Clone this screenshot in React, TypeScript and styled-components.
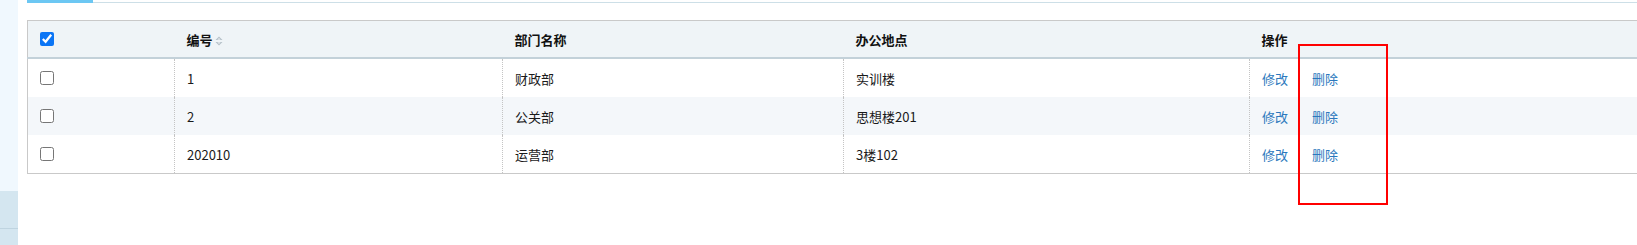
import React from 'react'
import styled, { createGlobalStyle } from 'styled-components'

const GlobalStyle = createGlobalStyle`
  html, body {
    margin: 0;
    padding: 0;
    background: #fff;
    overflow: hidden;
  }
  body {
    font-family: "Noto Sans CJK SC", "Noto Sans", sans-serif;
    font-size: 13px;
    color: #222;
  }
`

type Dept = { id: string; name: string; place: string }

const rows: Dept[] = [
  { id: '1', name: '财政部', place: '实训楼' },
  { id: '2', name: '公关部', place: '思想楼201' },
  { id: '202010', name: '运营部', place: '3楼102' },
]

const SortIcon: React.FC = () => (
  <SortSvg viewBox="0 0 8 10" width="8" height="10">
    <path d="M4 0.5 L7.5 4 L0.5 4 Z" fill="#b5c1c9" />
    <path d="M4 9.5 L7.5 6 L0.5 6 Z" fill="#b5c1c9" />
    <path d="M4 2.2 L5.6 3.6 L2.4 3.6 Z" fill="#fff" />
    <path d="M4 7.8 L5.6 6.4 L2.4 6.4 Z" fill="#fff" />
  </SortSvg>
)

const App: React.FC = () => {
  return (
    <Page>
      <GlobalStyle />
      <Sidebar>
        <MenuArea />
        <MenuItem />
        <MenuItem />
      </Sidebar>
      <Main>
        <TabBar>
          <ActiveTab />
        </TabBar>
        <Table>
          <colgroup>
            <col style={{ width: 147 }} />
            <col style={{ width: 328 }} />
            <col style={{ width: 341 }} />
            <col style={{ width: 406 }} />
            <col />
          </colgroup>
          <thead>
            <tr>
              <Th>
                <Check type="checkbox" defaultChecked />
              </Th>
              <Th>
                编号 <SortIcon />
              </Th>
              <Th>部门名称</Th>
              <Th>办公地点</Th>
              <Th>操作</Th>
            </tr>
          </thead>
          <tbody>
            {rows.map((r, i) => (
              <Row key={r.id} $striped={i % 2 === 1}>
                <Td $first>
                  <Check type="checkbox" />
                </Td>
                <Td>{r.id}</Td>
                <Td>{r.name}</Td>
                <Td>{r.place}</Td>
                <Td>
                  <ActionLink href="#">修改</ActionLink>
                  <ActionLink href="#">删除</ActionLink>
                </Td>
              </Row>
            ))}
          </tbody>
        </Table>
      </Main>
      <Highlight />
    </Page>
  )
}

const Page = styled.div`
  position: relative;
  display: flex;
  width: 1637px;
  height: 245px;
  overflow: hidden;
`

const Sidebar = styled.div`
  width: 18px;
  flex-shrink: 0;
  display: flex;
  flex-direction: column;
`

const MenuArea = styled.div`
  height: 191px;
  flex-shrink: 0;
  background: #f0f8fe;
`

const MenuItem = styled.div`
  height: 37px;
  flex-shrink: 0;
  background: #d4e6f0;
  border-bottom: 1px solid #bfd4e0;
`

const Main = styled.div`
  flex: 1;
  padding-left: 9px;
  min-width: 0;
`

const TabBar = styled.div`
  height: 2px;
  display: flex;
  align-items: flex-start;
  border-bottom: 1px solid #cddfe7;
  margin-bottom: 17px;
`

const ActiveTab = styled.div`
  width: 66px;
  height: 3px;
  background: #6cc7f3;
`

const Table = styled.table`
  width: calc(100% + 2px);
  border-collapse: collapse;
  table-layout: fixed;
  border-top: 1px solid #c9c9c9;
  border-left: 1px solid #c9c9c9;
  border-bottom: 1px solid #c9c9c9;
`

const Th = styled.th`
  height: 36px;
  padding: 0 0 0 12px;
  text-align: left;
  font-weight: 700;
  color: #111;
  background: #eff4f7;
  border-bottom: 2px solid #c3d1d9;
  vertical-align: middle;
  white-space: nowrap;
`

const SortSvg = styled.svg`
  vertical-align: -1px;
`

const Row = styled.tr<{ $striped: boolean }>`
  background: ${(p) => (p.$striped ? '#f4f7fa' : '#fff')};
`

const Td = styled.td<{ $first?: boolean }>`
  height: 38px;
  padding: 0 0 0 12px;
  vertical-align: middle;
  color: #1a1a1a;
  border-left: ${(p) => (p.$first ? 'none' : '1px dotted #c4c4c4')};
  white-space: nowrap;
`

const Check = styled.input`
  width: 14px;
  height: 14px;
  margin: 0;
  display: block;
  accent-color: #0b75f5;
`

const ActionLink = styled.a`
  color: #2b78bd;
  text-decoration: none;
  margin-right: 24px;
`

const Highlight = styled.div`
  position: absolute;
  left: 1298px;
  top: 44px;
  width: 86px;
  height: 157px;
  border: 2px solid #ff0000;
  pointer-events: none;
`

export default App
